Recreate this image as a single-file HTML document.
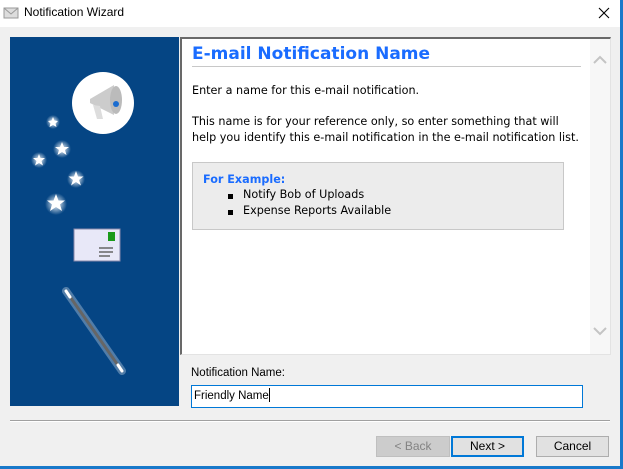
<!DOCTYPE html>
<html><head><style>
*{margin:0;padding:0;box-sizing:border-box}
body{width:623px;height:469px;background:#f0f0f0;position:relative;overflow:hidden;font-family:"Liberation Sans",sans-serif;font-size:12px;color:#000}
.a{position:absolute}
.v{font-family:"DejaVu Sans",sans-serif}
.btn{position:absolute;top:436px;height:21px;border:1px solid #adadad;background:#e1e1e1;text-align:center;line-height:19px;font-size:12px}
</style></head><body>
<div class="a" style="left:0;top:0;width:623px;height:27px;background:#fff"></div>
<svg class="a" style="left:3px;top:6px" width="16" height="14"><path d="M1 2h14v10H1z" fill="#ddd" stroke="#999"/><path d="M1 2l7 6 7-6" fill="none" stroke="#999"/></svg>
<div class="a" style="left:24px;top:5px;font-size:12px">Notification Wizard</div>
<svg class="a" style="left:598px;top:7px" width="12" height="12"><path d="M1 1L11 11M11 1L1 11" stroke="#000" stroke-width="1.1"/></svg>
<div class="a" style="left:620px;top:0;width:3px;height:469px;background:#1979ca"></div>
<div class="a" style="left:0;top:466px;width:623px;height:3px;background:#1979ca"></div>

<div class="a" style="left:10px;top:37px;width:169px;height:369px;background:#054584"></div>
<svg class="a" style="left:10px;top:37px" width="169" height="369">
<defs><radialGradient id="g"><stop offset="0" stop-color="#fff"/><stop offset="1" stop-color="#fff" stop-opacity="0"/></radialGradient></defs>
<circle cx="93" cy="66" r="31" fill="#fff"/>
<path d="M80 62l24-14v30l-24-12z" fill="#ccc"/><ellipse cx="106" cy="63" rx="6" ry="14" fill="#bbb"/><circle cx="106" cy="67" r="3" fill="#1a6cd0"/><path d="M83 68l4 14h6l-3-13z" fill="#ddd"/>
<circle cx="43" cy="85" r="7" fill="url(#g)"/><path d="M43 80l1.5 3.5 3.5.5-2.5 2.5 1 3.5-3.5-2-3.5 2 1-3.5-2.5-2.5 3.5-.5z" fill="#fff"/>
<circle cx="52" cy="112" r="9" fill="url(#g)"/><path d="M52 105l2 5 5 0-4 3 1.5 5-4.5-3-4.5 3 1.5-5-4-3 5 0z" fill="#fff"/>
<circle cx="29" cy="123" r="8" fill="url(#g)"/><path d="M29 117l1.5 4 4.5 0-3.5 3 1.5 4.5-4-2.5-4 2.5 1.5-4.5-3.5-3 4.5 0z" fill="#fff"/>
<circle cx="66" cy="142" r="9" fill="url(#g)"/><path d="M66 134l2 5.5 5.5 0-4.5 3.5 2 5.5-5-3.5-5 3.5 2-5.5-4.5-3.5 5.5 0z" fill="#fff"/>
<circle cx="46" cy="167" r="11" fill="url(#g)"/><path d="M46 157l2.5 6.5 6.5 0-5 4 2 6.5-6-4-6 4 2-6.5-5-4 6.5 0z" fill="#fff"/>
<rect x="64" y="192" width="46" height="32" fill="#e8e8f8" stroke="#8888aa"/><rect x="98" y="195" width="7" height="9" fill="#1a9a1a"/><path d="M89 211h14M89 215h14M89 219h11" stroke="#666" stroke-width="1.5"/>
<path d="M56 254l56 80" stroke="#fff" stroke-width="8" stroke-linecap="round" opacity=".3"/><path d="M56 254l56 80" stroke="#666" stroke-width="3" stroke-linecap="round"/><path d="M56 254l4 6M108 328l4 6" stroke="#fff" stroke-width="3" stroke-linecap="round"/>
</svg>

<div class="a" style="left:180px;top:37px;width:431px;height:318px;background:#fff;border-top:2px solid #696969;border-left:2px solid #696969;border-right:1px solid #e3e3e3;border-bottom:1px solid #e3e3e3"></div>
<div class="a" style="left:590px;top:39px;width:20px;height:315px;background:#f7f7f7"></div>
<svg class="a" style="left:593px;top:55px" width="14" height="10"><path d="M1 8l6-6 6 6" fill="none" stroke="#c4c4c4" stroke-width="2"/></svg>
<svg class="a" style="left:593px;top:326px" width="14" height="10"><path d="M1 2l6 6 6-6" fill="none" stroke="#c4c4c4" stroke-width="2"/></svg>

<div class="a v" style="left:192px;top:44px;font-size:17px;font-weight:bold;color:#1a6cff">E-mail Notification Name</div>
<div class="a" style="left:192px;top:66px;width:389px;height:1px;background:#c8c8c8"></div>
<div class="a v" style="left:192px;top:84px;font-size:11.2px">Enter a name for this e-mail notification.</div>
<div class="a v" style="left:192px;top:114px;font-size:11.2px;line-height:16px;white-space:nowrap">This name is for your reference only, so enter something that will<br>help you identify this e-mail notification in the e-mail notification list.</div>
<div class="a" style="left:192px;top:162px;width:372px;height:68px;background:#ececec;border:1px solid #c8c8c8"></div>
<div class="a v" style="left:203px;top:173px;font-size:11.2px;font-weight:bold;color:#1a6cff">For Example:</div>
<div class="a" style="left:228px;top:194px;width:5px;height:5px;background:#000"></div>
<div class="a" style="left:228px;top:210px;width:5px;height:5px;background:#000"></div>
<div class="a v" style="left:243px;top:188px;font-size:11.2px">Notify Bob of Uploads</div>
<div class="a v" style="left:243px;top:204px;font-size:11.2px">Expense Reports Available</div>

<div class="a" style="left:191px;top:367px;font-size:11.5px">Notification Name:</div>
<div class="a" style="left:191px;top:385px;width:392px;height:23px;background:#fff;border:1px solid #0078d7"></div>
<div class="a" style="left:194px;top:388px;font-size:11.5px">Friendly Name<span style="display:inline-block;width:1px;height:14px;background:#000;vertical-align:-3px"></span></div>

<div class="a" style="left:10px;top:420px;width:600px;height:1px;background:#a0a0a0"></div>
<div class="a" style="left:10px;top:421px;width:600px;height:1px;background:#fff"></div>
<div class="btn" style="left:376px;width:74px;background:#cccccc;border-color:#bfbfbf;color:#838383">&lt; Back</div>
<div class="btn" style="left:451px;width:73px;border:2px solid #0078d7;line-height:17px">Next &gt;</div>
<div class="btn" style="left:536px;width:73px">Cancel</div>
</body></html>
